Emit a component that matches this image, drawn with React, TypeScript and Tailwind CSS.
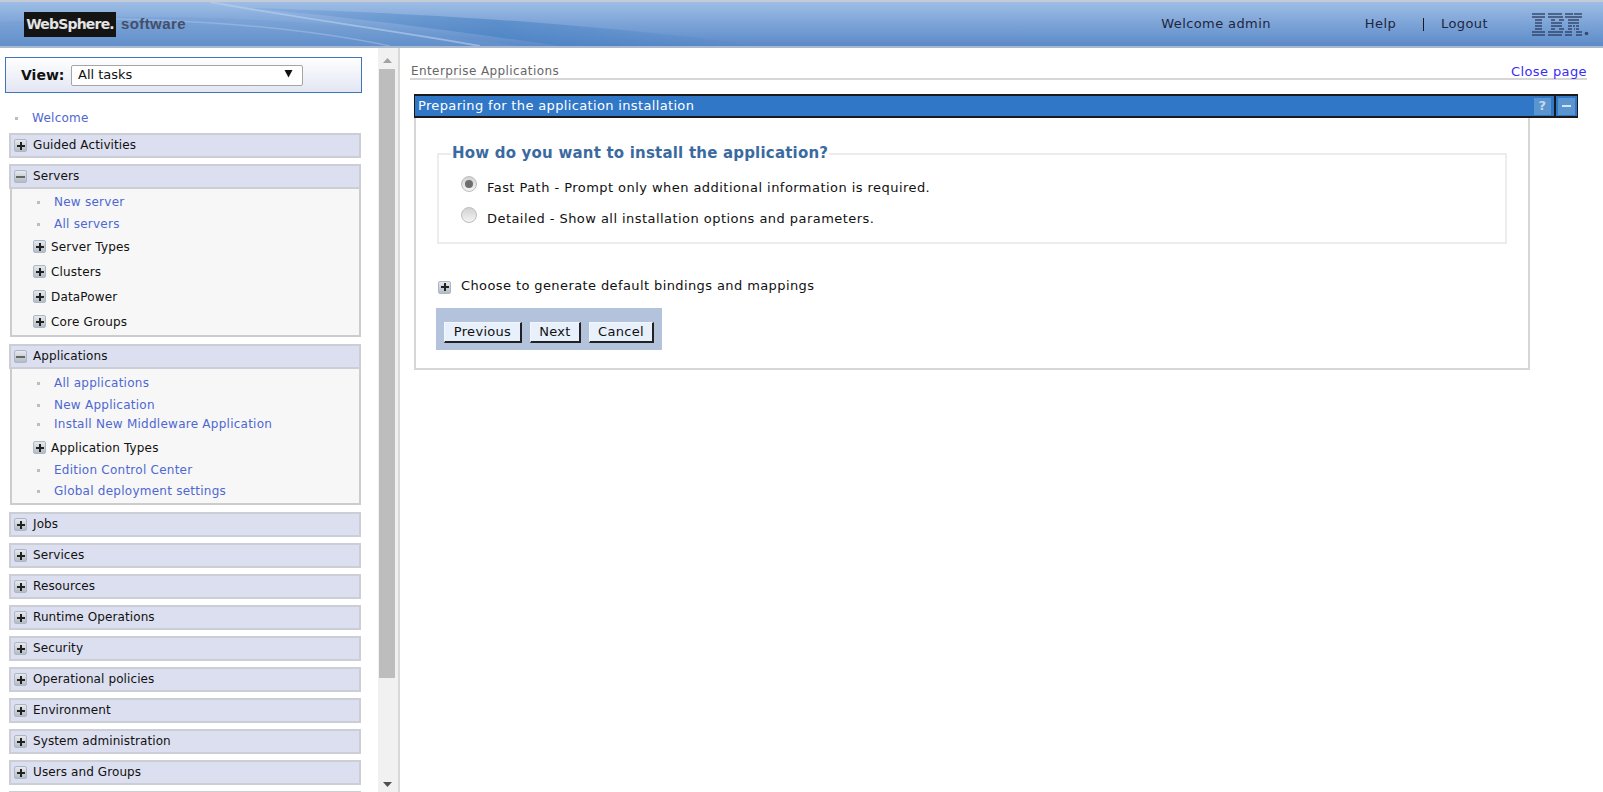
const font = "font-['DejaVu_Sans','Liberation_Sans',sans-serif]";

const PlusIcon = ({ minus = false }: { minus?: boolean }) => (
  <span className="relative flex h-[13px] w-[13px] shrink-0 items-center justify-center rounded-[2px] border border-[#a9b7c6] bg-gradient-to-b from-[#e6e9ec] to-[#b4bcc4]">
    <span className={`absolute h-[2px] ${minus ? "w-[9px] bg-[#666]" : "w-[8px] bg-[#222]"}`} />
    {!minus && <span className="absolute h-[8px] w-[2px] bg-[#222]" />}
  </span>
);

const NavLink = ({ label, className = "" }: { label: string; className?: string }) => (
  <div className={`flex shrink-0 items-center text-[12px] tracking-[0.25px] text-[#4f67d2] ${className}`}>
    <span className="mr-[14px] h-[3px] w-[3px] shrink-0 bg-[#bdbdbd]" />
    {label}
  </div>
);

const SubGroup = ({ label, className = "" }: { label: string; className?: string }) => (
  <div className={`flex shrink-0 items-center gap-[5px] text-[12px] tracking-[0.17px] text-[#111] ${className}`}>
    <PlusIcon />
    {label}
  </div>
);

const SectionHeader = ({ label, open = false, className = "" }: { label: string; open?: boolean; className?: string }) => (
  <div className={`flex h-[25px] shrink-0 items-center gap-[6px] border-2 border-[#ccced6] bg-[#dcdfef] pl-[3px] text-[12px] tracking-[0.1px] text-[#111] ${className}`}>
    <PlusIcon minus={open} />
    <span className="mb-[2px]">{label}</span>
  </div>
);

const collapsedBottom = [
  "Jobs",
  "Services",
  "Resources",
  "Runtime Operations",
  "Security",
  "Operational policies",
  "Environment",
  "System administration",
  "Users and Groups",
];

function Sidebar() {
  return (
    <aside className="flex h-[744px] w-[378px] shrink-0 flex-col overflow-hidden bg-white">
      <div className="ml-[5px] mt-[9px] flex h-[36px] w-[357px] shrink-0 items-center border border-[#3f75b5] bg-gradient-to-b from-white to-[#e3e6f3] pl-[15px]">
        <span className="w-[50px] text-[14px] font-bold text-[#111]">View:</span>
        <div className="flex h-[21px] w-[232px] items-center justify-between rounded-[2px] border border-[#a5a5a5] bg-white pl-[6px] pr-[9px] text-[13px] text-[#111]">
          All tasks
          <svg width="9" height="9" viewBox="0 0 9 9" className="mb-[3px]">
            <path d="M0.5 1h8L4.5 8.5z" fill="#111" />
          </svg>
        </div>
      </div>

      <NavLink label="Welcome" className="ml-[15px] mt-[17px] h-[16px]" />

      <SectionHeader label="Guided Activities" className="ml-[9px] mr-[17px] mt-[7px]" />

      <SectionHeader label="Servers" open className="ml-[9px] mr-[17px] mt-[6px]" />
      <div className="ml-[10px] mr-[17px] flex h-[148px] shrink-0 flex-col border-2 border-t-0 border-[#ccc] bg-[#f7f7f7] pl-[21px]">
        <NavLink label="New server" className="ml-[4px] mt-[5px] h-[16px]" />
        <NavLink label="All servers" className="ml-[4px] mt-[6px] h-[16px]" />
        <SubGroup label="Server Types" className="mt-[5px] h-[19px]" />
        <SubGroup label="Clusters" className="mt-[6px] h-[19px]" />
        <SubGroup label="DataPower" className="mt-[6px] h-[19px]" />
        <SubGroup label="Core Groups" className="mt-[6px] h-[19px]" />
      </div>

      <SectionHeader label="Applications" open className="ml-[9px] mr-[17px] mt-[7px]" />
      <div className="ml-[10px] mr-[17px] flex h-[136px] shrink-0 flex-col border-2 border-t-0 border-[#ccc] bg-[#f7f7f7] pl-[21px]">
        <NavLink label="All applications" className="ml-[4px] mt-[6px] h-[16px]" />
        <NavLink label="New Application" className="ml-[4px] mt-[6px] h-[16px]" />
        <NavLink label="Install New Middleware Application" className="ml-[4px] mt-[3px] h-[16px]" />
        <SubGroup label="Application Types" className="mt-[6px] h-[19px]" />
        <NavLink label="Edition Control Center" className="ml-[4px] mt-[5px] h-[16px]" />
        <NavLink label="Global deployment settings" className="ml-[4px] mt-[5px] h-[16px]" />
      </div>

      <div className="ml-[9px] mr-[17px] mt-[7px] flex shrink-0 flex-col gap-[6px]">
        {collapsedBottom.map((label) => (
          <SectionHeader key={label} label={label} />
        ))}
        {/* next section is cut off by the window, only its top edge shows */}
        <div className="h-[25px] border-2 border-[#ccced6] bg-[#dcdfef]" />
      </div>
    </aside>
  );
}

function Scrollbar() {
  return (
    <div className="flex h-[744px] w-[22px] shrink-0 flex-col items-center border-r-2 border-[#d9d9d9] bg-[#f1f1f1] pr-[2px]">
      <svg width="9" height="5" viewBox="0 0 9 5" className="mt-[10px]">
        <path d="M4.5 0L9 5H0z" fill="#a3a3a3" />
      </svg>
      <div className="mt-[6px] h-[609px] w-[16px] bg-[#bdbdbd]" />
      <svg width="9" height="5" viewBox="0 0 9 5" className="mt-auto mb-[5px]">
        <path d="M0 0h9L4.5 5z" fill="#505050" />
      </svg>
    </div>
  );
}

const Radio = ({ checked = false }: { checked?: boolean }) => (
  <span className="flex h-[16px] w-[16px] shrink-0 items-center justify-center rounded-full border border-[#bdbdbd] bg-gradient-to-b from-[#d2d2d2] to-[#f4f4f4]">
    {checked && <span className="h-[8px] w-[8px] rounded-full bg-[#6e6e6e]" />}
  </span>
);

const WizardButton = ({ label, className = "" }: { label: string; className?: string }) => (
  <button className={`flex h-[21px] items-center justify-center border border-[#f3f6fc] border-b-2 border-r-2 border-b-[#222] border-r-[#222] bg-[#e8f0fc] text-[13px] tracking-[0.3px] text-[#111] ${className}`}>
    {label}
  </button>
);

function Content() {
  return (
    <main className="min-w-0 flex-1 bg-white">
      <div className="ml-[10px] mr-[16px] mt-[14px] flex h-[18px] items-end justify-between border-b-2 border-[#d6d6d6]">
        <span className="pl-[1px] text-[12px] leading-[14px] tracking-[0.4px] text-[#666]">Enterprise Applications</span>
        <span className="mb-[-1px] text-[13px] leading-[14px] tracking-[0.4px] text-[#3a2cf5]">Close page</span>
      </div>

      <div className="ml-[14px] mr-[25px] mt-[14px] flex h-[24px] items-center justify-between border-x border-y-2 border-[#1a1a1a] bg-[#3077c8] pl-[3px] text-[13px] tracking-[0.35px] text-white">
        Preparing for the application installation
        <div className="flex h-full items-center">
          <span className="mr-[3px] flex h-[17px] w-[17px] items-center justify-center bg-[#5b95d0] text-[13px] font-bold text-[#c4d9ef]">?</span>
          <span className="flex h-full w-[23px] items-center justify-center border-l-2 border-[#1a1a1a]">
            <span className="flex h-[17px] w-[17px] items-center justify-center bg-[#5b95d0]">
              <span className="h-[2px] w-[9px] bg-[#d5e3f3]" />
            </span>
          </span>
        </div>
      </div>

      <div className="ml-[14px] mr-[73px] h-[252px] border-2 border-t-0 border-[#d6d6d6] pl-[21px] pr-[21px] pt-[27px]">
        <fieldset className="h-[99px] border-2 border-[#ececec] pl-[12px]">
          <legend className="px-[1px] text-[15px] font-bold leading-[17px] tracking-[0.2px] text-[#3b6aa0]">How do you want to install the application?</legend>
          <div className="ml-[10px] mt-[14px] flex items-start gap-[10px] text-[13px] leading-[16px] tracking-[0.45px] text-[#111]">
            <Radio checked />
            <span className="mt-[4px]">Fast Path - Prompt only when additional information is required.</span>
          </div>
          <div className="ml-[10px] mt-[11px] flex items-start gap-[10px] text-[13px] leading-[16px] tracking-[0.45px] text-[#111]">
            <Radio />
            <span className="mt-[4px]">Detailed - Show all installation options and parameters.</span>
          </div>
        </fieldset>

        <div className="ml-[1px] mt-[34px] flex h-[18px] items-center gap-[10px] text-[13px] tracking-[0.4px] text-[#111]">
          <PlusIcon />
          <span className="mb-[2px]">Choose to generate default bindings and mappings</span>
        </div>

        <div className="-ml-[1px] mt-[12px] flex h-[42px] w-[226px] items-end gap-[8px] bg-[#b3c3dc] pb-[7px] pl-[8px]">
          <WizardButton label="Previous" className="w-[78px]" />
          <WizardButton label="Next" className="w-[51px]" />
          <WizardButton label="Cancel" className="w-[65px]" />
        </div>
      </div>
    </main>
  );
}

const ibmRows = [
  "M0 0h13M16 0h14M33 0h8M42 0h8",
  "M0 3h13M16 3h15M33 3h9M41 3h9",
  "M3 6h7M19 6h4M27 6h5M36 6h6M41 6h6",
  "M3 9h7M19 9h11M36 9h11",
  "M3 12h7M19 12h11M36 12h4M41 12h2M44 12h3",
  "M3 15h7M19 15h4M27 15h5M36 15h4M42 15h1M44 15h3",
  "M0 18h13M16 18h15M33 18h7M44 18h6",
  "M0 21h13M16 21h14M33 21h7M44 21h6",
];

function Header() {
  return (
    <header className="relative flex h-[48px] items-center overflow-hidden border-b-2 border-t-2 border-b-[#a9b9d0] border-t-[#c4cbd6] bg-gradient-to-b from-[#9dbde5] to-[#5c8ac8]">
      <svg className="absolute left-0 top-0 h-full w-[800px]" viewBox="0 0 800 48" preserveAspectRatio="none">
        <defs>
          <linearGradient id="sweep" x1="0" x2="1" y1="0" y2="0">
            <stop offset="0" stopColor="#3f7cc0" stopOpacity="0.1" />
            <stop offset="0.5" stopColor="#3f7cc0" stopOpacity="0.55" />
            <stop offset="1" stopColor="#3f7cc0" stopOpacity="0" />
          </linearGradient>
        </defs>
        <path d="M0 22C160 10 300 16 520 48H0z" fill="#6f9ad2" opacity="0.35" />
        <path d="M240 6C330 14 420 26 560 48H760C640 30 480 14 240 6z" fill="url(#sweep)" />
        <path d="M210 0C300 18 400 32 480 48" stroke="#b9d2ef" strokeWidth="2" fill="none" opacity="0.6" />
        <path d="M100 18C220 20 320 32 390 48" stroke="#a8c6ea" strokeWidth="1.5" fill="none" opacity="0.5" />
      </svg>
      <div className="relative ml-[24px] flex h-[25px] w-[92px] items-center justify-center bg-[#141414] text-[14px] font-bold tracking-[-0.8px] text-[#e4e4e4]">
        WebSphere.
      </div>
      <span className="relative ml-[5px] font-['Liberation_Sans',sans-serif] text-[15px] font-bold tracking-[0.4px] text-[#434f6b]">software</span>
      <div className="relative ml-auto flex items-center text-[13px] tracking-[0.4px] text-[#1f2540]">
        <span>Welcome admin</span>
        <span className="ml-[94px]">Help</span>
        <span className="ml-[27px] h-[13px] w-px bg-[#1a1a1a]" />
        <span className="ml-[17px]">Logout</span>
        <svg width="57" height="23" viewBox="0 0 57 23" className="ml-[44px] mr-[14px]">
          {/* IBM stripes */}
          <g stroke="#2b3a5c" strokeWidth="1.7" fill="none" opacity="0.85" transform="translate(0 1)">
            {ibmRows.map((d) => (
              <path key={d} d={d} />
            ))}
          </g>
          <circle cx="54.5" cy="20.5" r="1.8" fill="#2b3a5c" opacity="0.85" />
        </svg>
      </div>
    </header>
  );
}

export default function App() {
  return (
    <div className={`h-[792px] w-[1603px] overflow-hidden bg-white ${font}`}>
      <Header />
      <div className="flex">
        <Sidebar />
        <Scrollbar />
        <Content />
      </div>
    </div>
  );
}
